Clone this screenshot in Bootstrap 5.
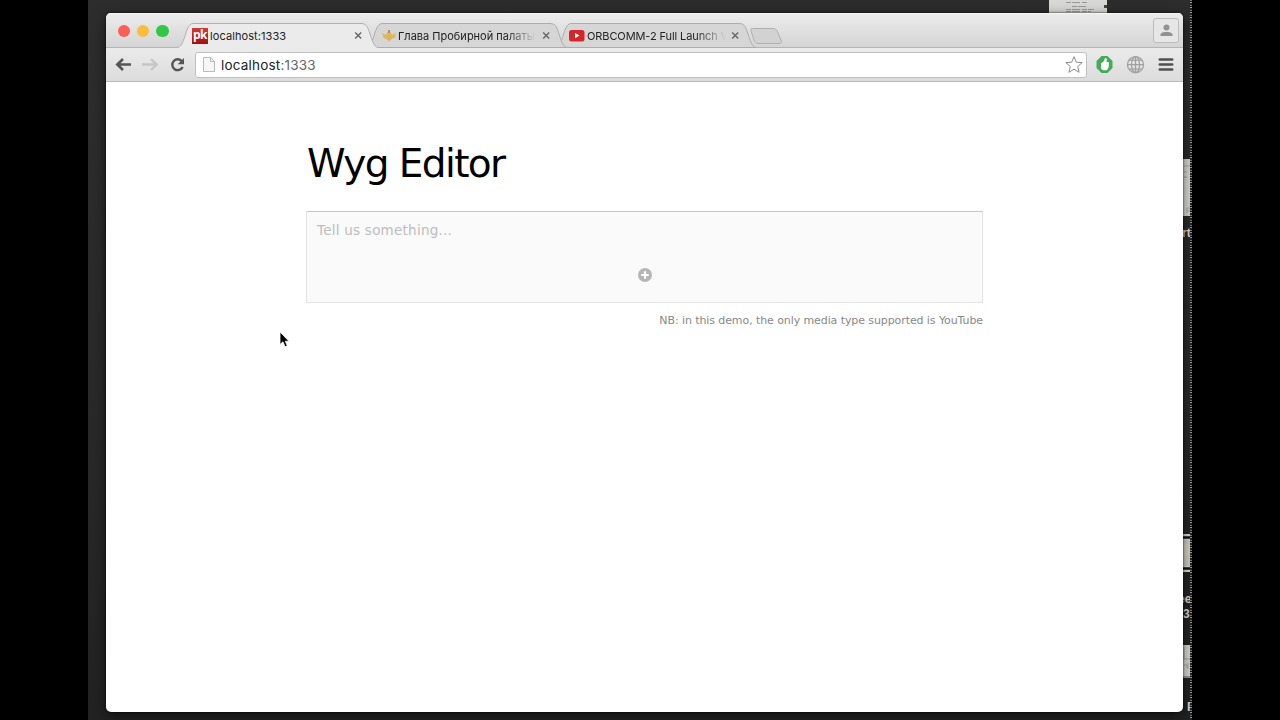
<!DOCTYPE html>
<html lang="en">
<head>
<meta charset="utf-8">
<meta name="viewport" content="width=device-width, initial-scale=1">
<title>Wyg Editor</title>
<link href="https://cdn.jsdelivr.net/npm/bootstrap@5.3.0/dist/css/bootstrap.min.css" rel="stylesheet">
<style>
body{background:#000;width:1280px;height:720px;overflow:hidden;font-family:Inter,Roboto,"Noto Sans",sans-serif}
.desktop{width:1104px;height:720px;margin-left:88px;padding:13px 9px 8px 18px;background:linear-gradient(#2d2d2d,#292929 60%,#222)}
.desk-item{position:absolute;overflow:hidden;color:#ddd;font:bold 12px/14px "Liberation Sans",sans-serif;white-space:nowrap}
.thumb{background:#d8d8d6}
.edge{position:absolute;right:0;top:0;width:2px;height:720px;background:repeating-linear-gradient(#777 0 1px,#111 1px 2px,#a99 2px 3px,#222 3px 5px)}
.win{border-radius:5px;background:#fff;box-shadow:0 0 2px #000,0 4px 14px rgba(0,0,0,.55);overflow:hidden;z-index:1}
.strip{height:35px;background:linear-gradient(#ececec,#d4d4d4);box-shadow:inset 0 1px #f6f6f6,inset 0 -1px #b5b5b5;padding:0 4px 0 11.5px}
.lights{gap:7px;width:59.5px;margin-top:1px}
.light{width:12.4px;height:12.4px;border-radius:50%}
.btab{width:201px;height:25px;margin-right:-12px;padding:0 14px 0 15px;font-size:11px;color:#222}
.btab>.shape{position:absolute;left:0;top:0}
.btab .inner{position:relative;height:24px;padding-top:1px}
.fade-text{overflow:hidden;white-space:nowrap;position:relative;top:.5px}
.first-title{letter-spacing:.08px}
.fade-end{-webkit-mask-image:linear-gradient(90deg,#000 78%,transparent);mask-image:linear-gradient(90deg,#000 78%,transparent)}
.pk{width:16px;height:16px;background:linear-gradient(#d33a36,#a3100f);color:#fff;font:bold 12px/14px "Open Sans",sans-serif;letter-spacing:-.4px}
.profile{width:26px;height:25px;border:1px solid #bdbdbd;border-radius:3px;background:#e6e6e6}
.tools{height:34px;background:linear-gradient(#ebebeb,#dcdcdc);border-bottom:1px solid #bababa;padding-left:9px;padding-right:8px}
.omni{width:892px;height:26px;border:1px solid #c0c0c0;border-radius:3px;background:#fff;font-size:13.5px;color:#222;padding:1px 5px 0 7px;letter-spacing:.2px}
.omni .port{color:#666}
.page-area{width:677px;margin-left:200px;padding-top:55px;font-family:"DejaVu Sans",sans-serif}
.page-area h1{font-size:39px;line-height:54px;margin:0 0 20px 1px;color:#000;font-weight:400;letter-spacing:-1.6px;white-space:nowrap}
.editor{height:92px;background:#fafafa;border:1px solid #e3e3e3;border-top-color:#c6c6c6;border-radius:1px;padding:8px 10px;color:#bdbdbd;font-size:13.5px;line-height:20px}
.editor span{letter-spacing:.24px}
.note{font-size:11px;line-height:16px;margin-top:10px;color:#888;white-space:nowrap;letter-spacing:-.09px}
.cursor{position:absolute;left:279px;top:331px;z-index:5}
svg{display:block;flex:none}
</style>
<script src="https://cdn.jsdelivr.net/npm/bootstrap@5.3.0/dist/js/bootstrap.bundle.min.js"></script>
</head>
<body>
<div class="desktop position-relative">
  <!-- desktop icons partly hidden by the window -->
  <div class="desk-item thumb" style="left:961px;top:0;width:58px;height:14px">
    <svg width="58" height="14" stroke="#999" stroke-width="1" stroke-dasharray="5 1 8 2"><path d="M17 2.5h22M23 6.5h16M17 9.5h28M17 11.5h25"/><path d="M55 6.5h3" stroke="#444" stroke-width="3"/></svg>
  </div>
  <div class="desk-item thumb" style="left:1094px;top:159px;width:9px;height:57px"><svg width="9" height="57" fill="none" stroke="#aaa"><path d="M2 7h6M2 13h3M2 18h3M5 54v-5h4M5 52h4"/></svg></div>
  <div class="desk-item" style="left:1094px;top:226px;width:10px;height:15px">rt</div>
  <div class="desk-item" style="left:1094px;top:534px;width:9px;height:38px;background:#ddd"><svg width="9" height="38"><path d="M0 3.5h9M0 34.5h9" stroke="#111" stroke-width="2.5"/><path d="M0 6h9v26H0z" fill="#cfcfc8"/><path d="M2 10h6v12H2z" fill="#d3d6bc"/></svg></div>
  <div class="desk-item" style="left:1090px;top:592px;width:14px;height:15px">ee</div>
  <div class="desk-item" style="left:1095px;top:607px;width:9px;height:15px">3</div>
  <div class="desk-item thumb" style="left:1094px;top:645px;width:9px;height:33px"><svg width="9" height="33"><path d="M2 2v12h6M2 20h3v3M6 18v6" fill="none" stroke="#a8a8a8"/><path d="M0 31h9v2H0z" fill="#999"/></svg></div>
  <div class="desk-item" style="left:1099px;top:700px;width:5px;height:15px">P</div>
  <div class="edge"></div>

  <div class="win position-relative h-100 d-flex flex-column">
    <div class="strip d-flex">
      <div class="lights d-flex align-items-center">
        <span class="light" style="background:#f75f57"></span>
        <span class="light" style="background:#fcbc40"></span>
        <span class="light" style="background:#33c748"></span>
      </div>
      <div class="d-flex align-self-end flex-grow-1">
        <div class="btab position-relative z-3">
          <svg class="shape" width="201" height="25"><path d="M0 24.5C4 24 5 21 7 16C9 10 11 .5 16 .5H184C190 .5 191 5 193 11C195 17 197 24 201 24.5V25H0Z" fill="#ebebeb"/><path d="M0 24.5C4 24 5 21 7 16C9 10 11 .5 16 .5H184C190 .5 191 5 193 11C195 17 197 24 201 24.5" fill="none" stroke="#b0b0b0"/></svg>
          <div class="inner d-flex align-items-center">
            <span class="pk text-center">pk</span><span class="fade-text first-title flex-grow-1" style="margin-left:2px">localhost:1333</span>
            <svg width="9" height="9" style="margin-right:1.5px"><path d="M1.2 1.5l6 6m0-6l-6 6" stroke="#666" stroke-width="1.4"/></svg>
          </div>
        </div>
        <div class="btab position-relative z-2">
          <svg class="shape" width="201" height="25"><path d="M0 24.5C4 24 5 21 7 16C9 10 11 .5 16 .5H184C190 .5 191 5 193 11C195 17 197 24 201 24.5Z" fill="#d6d6d6" stroke="#adadad"/></svg>
          <div class="inner d-flex align-items-center">
            <svg width="16" height="16" viewBox="0 0 16 16" fill="#dfb65a"><path d="M1 5l4 2 1.500-3h3L11 7l4-2.500-1 4 1 1-4 1-3 3-3.500-3-3-1 1-1z"/><path d="M7 2h2v3H7z" fill="#b79052"/></svg>
            <span class="fade-text fade-end flex-grow-1" style="margin:0 6px 0 1px">Глава Пробирной палаты…</span>
            <svg width="9" height="9" style="margin-right:2px"><path d="M1.2 1.5l6 6m0-6l-6 6" stroke="#666" stroke-width="1.4"/></svg>
          </div>
        </div>
        <div class="btab position-relative z-1">
          <svg class="shape" width="201" height="25"><path d="M0 24.5C4 24 5 21 7 16C9 10 11 .5 16 .5H184C190 .5 191 5 193 11C195 17 197 24 201 24.5Z" fill="#d6d6d6" stroke="#adadad"/></svg>
          <div class="inner d-flex align-items-center">
            <svg width="16" height="16" style="margin-left:-1px"><rect y="2" width="15.5" height="11.5" rx="2.5" fill="#d5262a"/><path d="M6 5v5.200l4.600-2.600z" fill="#fff"/></svg>
            <span class="fade-text fade-end flex-grow-1" style="margin:0 5px 0 2px;letter-spacing:-.1px">ORBCOMM-2 Full Launch W</span>
            <svg width="9" height="9" style="margin-right:2px"><path d="M1.2 1.5l6 6m0-6l-6 6" stroke="#666" stroke-width="1.4"/></svg>
          </div>
        </div>
        <svg width="34" height="18" style="margin-left:5px;margin-top:4px"><path d="M3.5 1.5H24C27 1.5 28 3 29 6L32 13C33 16 32 16.5 30 16.5H9C7 16.5 6 15.5 5 13L2 4C1.5 2 2 1.5 3.5 1.5Z" fill="#d2d2d2" stroke="#b0b0b0"/></svg>
      </div>
      <div class="profile align-self-center d-flex justify-content-center align-items-center">
        <svg width="13" height="13" fill="#929292"><circle cx="6.5" cy="3.5" r="3"/><path d="M.5 12V10.500C1 8.500 4 8 6.500 8S12 8.500 12.500 10.500V12z"/></svg>
      </div>
    </div>
    <div class="tools d-flex align-items-center">
      <svg width="18" height="16" fill="none" stroke="#555" stroke-width="2.6"><path d="M2 7.500h14M8 2L2.300 7.500 8 13"/></svg>
      <svg width="18" height="16" fill="none" stroke="#c6c6c6" stroke-width="2.4" style="margin-left:8px"><path d="M1 7.500h14M10 2l5.700 5.500L10 13"/></svg>
      <svg width="16" height="16" style="margin-left:10px"><path d="M13 4.400A5.400 5.400 0 1 0 13.600 10" fill="none" stroke="#555" stroke-width="2.4"/><path d="M15 1v6.300H8.700z" fill="#555"/></svg>
      <div class="omni d-flex align-items-center" style="margin-left:10px">
        <svg width="12" height="16" style="margin:-1px 0 0 -.5px"><path d="M.5.500h7l4 4v10H.5z" fill="#f6f6f6" stroke="#bbb"/><path d="M7.500.500v4h4" fill="none" stroke="#bbb"/></svg>
        <span class="flex-grow-1" style="margin-left:6.5px">localhost<span class="port">:1333</span></span>
        <svg width="18" height="18" style="margin:-1px -2px 0 0"><path d="M9 .7l2.300 5.500 5.900.4-4.500 3.900 1.400 5.800L9 13.200l-5.100 3.100 1.400-5.800L.8 6.600l5.900-.4z" fill="#fff" stroke="#8b8b8b"/></svg>
      </div>
      <svg width="18" height="18" style="margin-left:9px"><path d="M5.500 0h6l5 5v7l-5 5h-6l-5-5V5z" fill="#42ad58"/><path d="M5 7.500L8 5l1-3c2-.5 2.200 1.500 1.500 4H12c1.200 0 1.200 1.500.8 2.500.5 1 .2 1.800-.3 2.300 0 1-.2 1.500-.8 2 0 1.200-1 1.500-2.500 1.500-2 0-3-.3-4.200-1.500z" fill="#fff"/></svg>
      <svg width="19" height="18" fill="none" stroke="#a0a0a0" stroke-width="1.3" style="margin-left:12px"><circle cx="9.5" cy="8.7" r="8"/><ellipse cx="9.5" cy="8.7" rx="4" ry="8"/><path d="M9.500.7v16M1.500 8.700h16M3 4.200h13M3 13.200h13"/></svg>
      <svg width="16" height="14" style="margin-left:13px"><path d="M1.800 1.500h12.400M1.800 6.500h12.400M1.800 11.500h12.400" stroke="#505050" stroke-width="2.6" stroke-linecap="round"/></svg>
    </div>
    <main class="page-area">
      <h1>Wyg Editor</h1>
      <div class="editor d-flex flex-column">
        <span>Tell us something...</span>
        <svg class="mx-auto" width="14" height="14" style="margin-top:28px"><circle cx="7" cy="7" r="7" fill="#b5b5b5"/><path d="M7 3.200v7.600M3.200 7h7.600" stroke="#fff" stroke-width="2.2"/></svg>
      </div>
      <div class="note text-end"><span>NB: in this demo, the only media type supported is YouTube</span></div>
    </main>
  </div>
</div>
<svg class="cursor" width="12" height="18"><path d="M1 1v12.500l3-2.700 2 5 2.300-1-2-4.600H10z" fill="#000" stroke="#fff" stroke-width=".8"/></svg>
</body>
</html>
